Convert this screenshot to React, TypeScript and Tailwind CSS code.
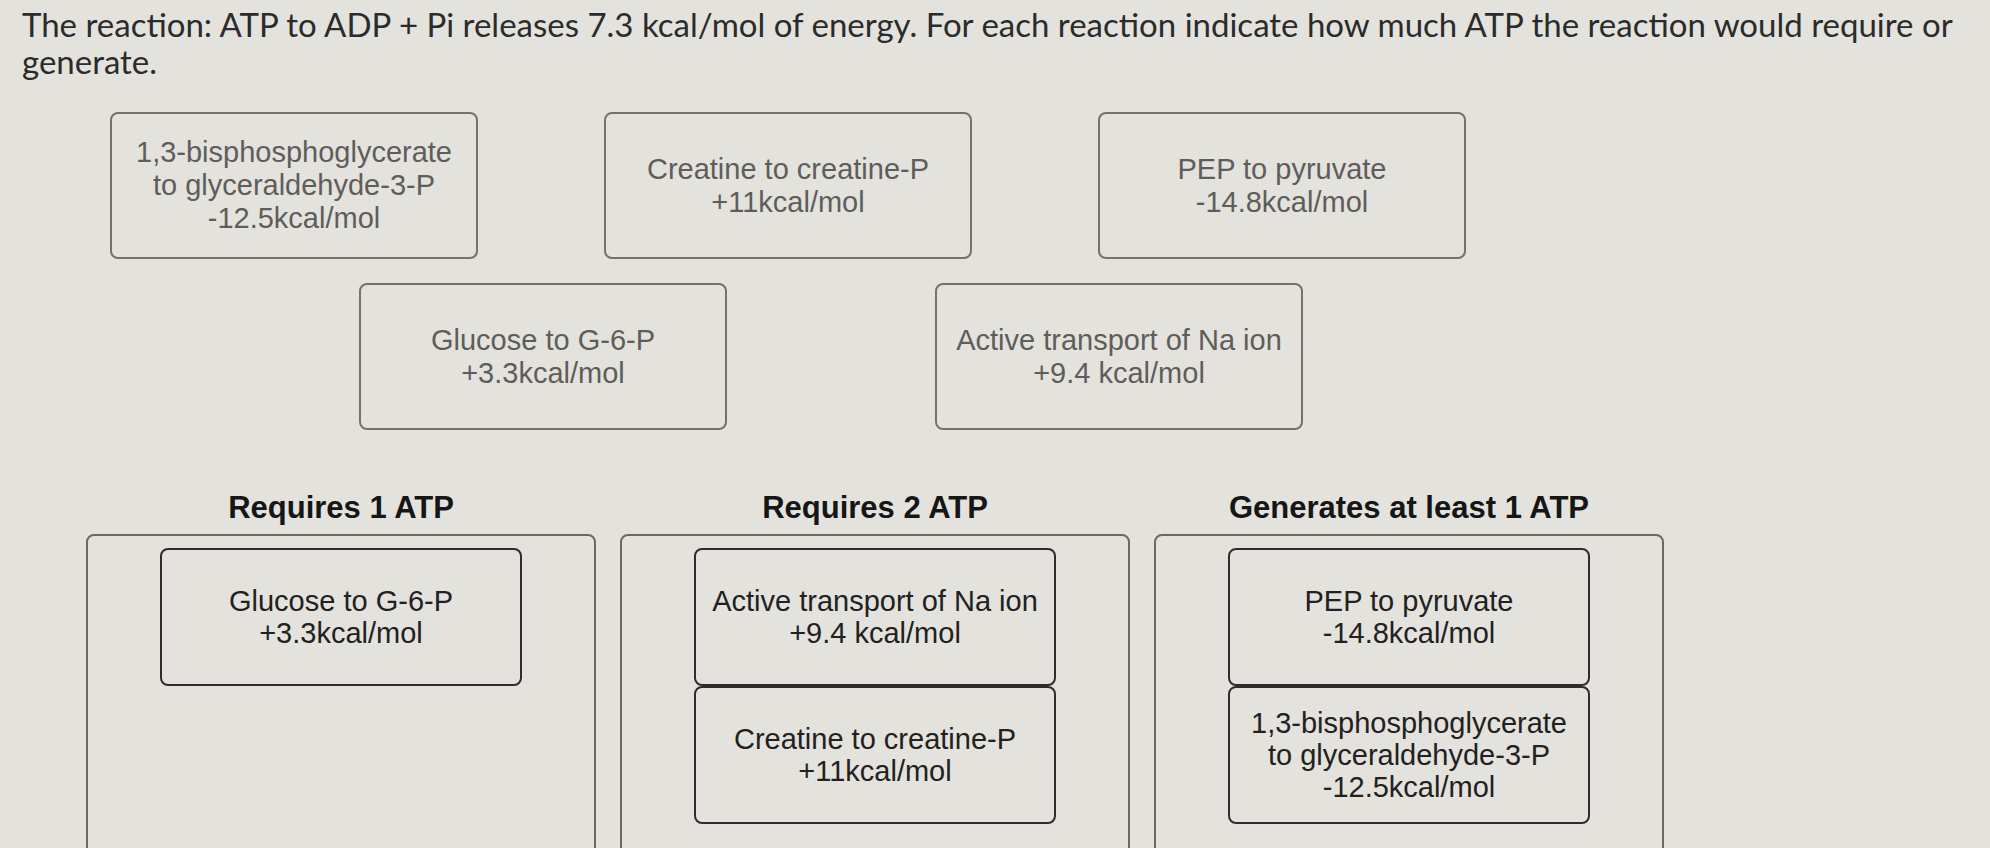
import React from 'react';

type Reaction = { id: string; lines: string[] };

const reactions: Record<string, Reaction> = {
  bpg: { id: 'bpg', lines: ['1,3-bisphosphoglycerate', 'to glyceraldehyde-3-P', '-12.5kcal/mol'] },
  creatine: { id: 'creatine', lines: ['Creatine to creatine-P', '+11kcal/mol'] },
  pep: { id: 'pep', lines: ['PEP to pyruvate', '-14.8kcal/mol'] },
  glucose: { id: 'glucose', lines: ['Glucose to G-6-P', '+3.3kcal/mol'] },
  sodium: { id: 'sodium', lines: ['Active transport of Na ion', '+9.4 kcal/mol'] },
};

const bins = [
  { title: 'Requires 1 ATP', items: ['glucose'] },
  { title: 'Requires 2 ATP', items: ['sodium', 'creatine'] },
  { title: 'Generates at least 1 ATP', items: ['pep', 'bpg'] },
];

// Card left in the answer pool (lighter, not yet placed)
const PoolCard = ({ r }: { r: Reaction }) => (
  <div className="w-[368px] h-[147px] shrink-0 rounded-lg border-2 border-[#75726e] flex flex-col items-center justify-center text-[29px] leading-[33px] text-[#5f5d5a] text-center">
    {r.lines.map((l) => (
      <span key={l}>{l}</span>
    ))}
  </div>
);

// Card dropped into a bin
const PlacedCard = ({ r }: { r: Reaction }) => (
  <div className="w-[362px] h-[138px] rounded-lg border-2 border-[#2e2d2c] flex flex-col items-center justify-center text-[29px] leading-[32px] text-[#222120] text-center">
    {r.lines.map((l) => (
      <span key={l}>{l}</span>
    ))}
  </div>
);

export default function App() {
  return (
    <div
      className="w-[1990px] h-[848px] overflow-hidden bg-[#e3e2dd] text-[#2a2a2a]"
      style={{ fontFamily: '"Liberation Sans", Arial, sans-serif' }}
    >
      <p
        className="pl-[22px] pt-[6px] text-[33px] leading-[37px] text-[#2b2b2b]"
        style={{ fontFamily: 'Lato, "Liberation Sans", sans-serif' }}
      >
        The reaction: ATP to ADP + Pi releases 7.3 kcal/mol of energy. For each reaction indicate how much ATP the reaction would require or
        <br />
        generate.
      </p>

      {/* unplaced reactions */}
      <div className="mt-[32px] flex flex-col gap-[24px]">
        <div className="flex gap-[126px] pl-[110px]">
          <PoolCard r={reactions.bpg} />
          <PoolCard r={reactions.creatine} />
          <PoolCard r={reactions.pep} />
        </div>
        <div className="flex gap-[208px] pl-[359px]">
          <PoolCard r={reactions.glucose} />
          <PoolCard r={reactions.sodium} />
        </div>
      </div>

      {/* drop targets */}
      <div className="mt-[60px] flex gap-[24px] pl-[86px]">
        {bins.map((b) => (
          <div key={b.title} className="w-[510px] flex flex-col items-center">
            <h3 className="text-[31px] leading-[36px] font-bold text-[#161616]">{b.title}</h3>
            <div className="mt-[8px] w-full h-[340px] rounded-lg border-2 border-[#6b6865] pt-[12px] flex flex-col items-center">
              {b.items.map((id) => (
                <PlacedCard key={id} r={reactions[id]} />
              ))}
            </div>
          </div>
        ))}
      </div>
    </div>
  );
}
